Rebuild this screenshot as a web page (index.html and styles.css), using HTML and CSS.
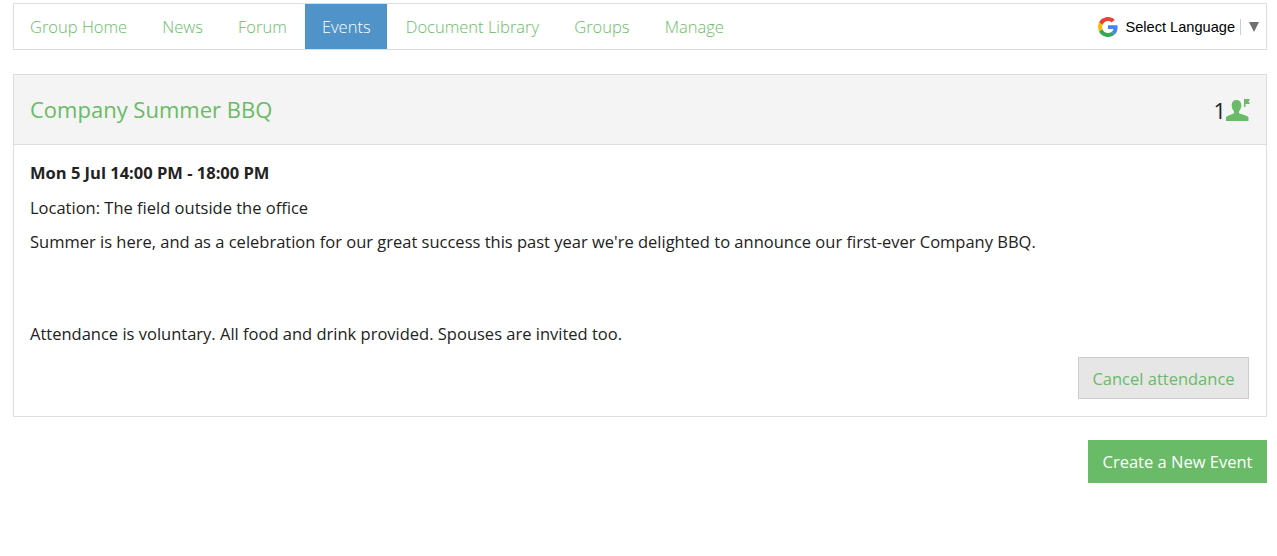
FILE: index.html
```html
<!DOCTYPE html>
<html lang="en">
<head>
    <meta charset="UTF-8">
    <meta name="viewport" content="width=device-width, initial-scale=1.0">
    <title>Company Summer BBQ</title>
    <link rel="stylesheet" href="styles.css">
</head>
<body>
    <div class="group-nav">
        <ul class="nav-links">
            <li><a href="#">Group Home</a></li>
            <li><a href="#">News</a></li>
            <li><a href="#">Forum</a></li>
            <li class="active"><a href="#">Events</a></li>
            <li><a href="#">Document Library</a></li>
            <li><a href="#">Groups</a></li>
            <li><a href="#">Manage</a></li>
        </ul>
        <div class="translate">
            <svg class="google-logo" viewBox="0 0 48 48" width="20" height="20">
                <path fill="#EA4335" d="M24 9.500c3.500 0 6.700 1.200 9.200 3.600l6.900-6.900C35.900 2.400 30.500 0 24 0 14.600 0 6.500 5.400 2.600 13.200l8 6.200C12.500 13.600 17.800 9.500 24 9.500z"/>
                <path fill="#4285F4" d="M47 24.500c0-1.600-.1-3.100-.4-4.500H24v9h12.900c-.6 3-2.200 5.500-4.700 7.200l7.700 6C44.400 37.900 47 31.800 47 24.500z"/>
                <path fill="#FBBC05" d="M10.600 28.600c-.5-1.400-.8-3-.8-4.600s.3-3.200.8-4.600l-8-6.200C.9 16.500 0 20.100 0 24s.9 7.500 2.600 10.800l8-6.200z"/>
                <path fill="#34A853" d="M24 48c6.500 0 11.900-2.100 15.900-5.800l-7.700-6c-2.200 1.400-4.900 2.300-8.200 2.300-6.200 0-11.500-4.100-13.400-9.900l-8 6.200C6.500 42.600 14.600 48 24 48z"/>
            </svg>
            <span class="translate-label">Select Language</span>
            <span class="translate-sep"></span>
            <span class="translate-arrow"></span>
        </div>
    </div>

    <div class="event-panel">
        <div class="event-header">
            <h2>Company Summer BBQ</h2>
            <div class="attendees">
                <span>1</span>
                <svg viewBox="0 0 24 22" width="24" height="22">
                    <path fill="#6abb67" d="M10.500 1c3 0 4.800 2 4.800 5 0 2.600-1 5-2.300 6.300V14c0 1 6.500 1.500 9.500 4.200V22H0v-3.800C3 15.500 8 15 8 14v-1.700C6.700 11 5.700 8.600 5.700 6c0-3 1.800-5 4.800-5z"/>
                    <path fill="#6abb67" d="M18 0h6l-1.500 2.500L24 5h-4.500v3H18z"/>
                </svg>
            </div>
        </div>
        <div class="event-body">
            <p class="event-date">Mon 5 Jul 14:00 PM - 18:00 PM</p>
            <p>Location: The field outside the office</p>
            <p>Summer is here, and as a celebration for our great success this past year we're delighted to announce our first-ever Company BBQ.</p>
            <p class="spaced">Attendance is voluntary. All food and drink provided. Spouses are invited too.</p>
            <div class="event-actions">
                <button class="btn-cancel" type="button">Cancel attendance</button>
            </div>
        </div>
    </div>

    <div class="page-actions">
        <button class="btn-create" type="button">Create a New Event</button>
    </div>
</body>
</html>
```

FILE: styles.css
```css
body {
    margin: 0;
    padding: 3px 10px 0 13px;
    font-family: "Open Sans", sans-serif;
    font-size: 16.5px;
    color: #222;
    background-color: #fff;
}
.group-nav {
    display: flex;
    justify-content: space-between;
    align-items: center;
    height: 45px;
    border: 1px solid #ddd;
    background-color: #fff;
}
.nav-links {
    display: flex;
    margin: 0;
    padding: 0;
    list-style: none;
}
.nav-links a {
    display: block;
    padding: 1px 17.6px 0;
    line-height: 44px;
    font-weight: 300;
    color: #6abb67;
    text-decoration: none;
}
.nav-links li:first-child a {
    padding-left: 16px;
}
.nav-links li.active {
    margin: 0 1px;
}
.nav-links li.active a {
    padding: 1px 16.6px 0;
    background-color: #4f93c8;
    color: #fff;
}
.translate {
    display: flex;
    align-items: center;
    padding-right: 7px;
    font-family: "Liberation Sans", Arial, sans-serif;
    font-size: 14.6px;
    color: #000;
}
.google-logo {
    margin-right: 7px;
}
.translate-sep {
    width: 1px;
    height: 16px;
    margin: 0 8px 0 5px;
    background-color: #ccc;
}
.translate-arrow {
    width: 0;
    height: 0;
    border-left: 5px solid transparent;
    border-right: 5px solid transparent;
    border-top: 10px solid #6f6f6f;
}
.event-panel {
    margin-top: 24px;
    border: 1px solid #ddd;
}
.event-header {
    display: flex;
    justify-content: space-between;
    align-items: center;
    height: 67px;
    padding: 0 16px 2px;
    border-bottom: 1px solid #ddd;
    background-color: #f4f4f4;
}
.event-header h2 {
    margin: 0;
    font-size: 22px;
    font-weight: 400;
    color: #6abb67;
}
.attendees {
    display: flex;
    align-items: center;
    margin-top: 2px;
    font-size: 22px;
    color: #222;
}
.event-body {
    padding: 17px 17px 17px 16px;
}
.event-body p {
    margin: 0 0 12px;
    line-height: 22px;
}
.event-body .event-date {
    margin-bottom: 13px;
    font-weight: 700;
}
.event-body .spaced {
    margin-top: 70px;
}
.event-actions {
    display: flex;
    justify-content: flex-end;
}
.btn-cancel {
    width: 171px;
    height: 42px;
    border: 1px solid #ccc;
    background-color: #e6e6e6;
    font-family: inherit;
    font-size: 16.5px;
    color: #6abb67;
}
.page-actions {
    display: flex;
    justify-content: flex-end;
    margin-top: 23px;
}
.btn-create {
    width: 179px;
    height: 43px;
    border: none;
    background-color: #6abb67;
    font-family: inherit;
    font-size: 16.5px;
    color: #fff;
}
```
